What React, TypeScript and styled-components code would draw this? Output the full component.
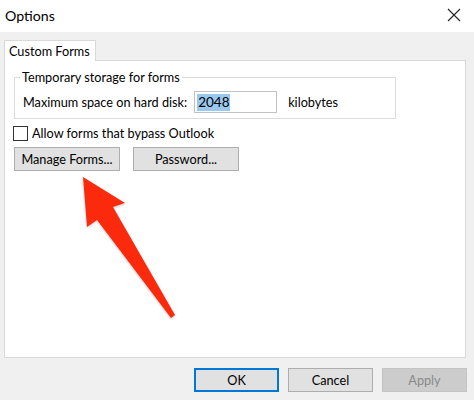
import styled, { createGlobalStyle } from 'styled-components';

const GlobalStyle = createGlobalStyle`
  html, body {
    margin: 0;
    padding: 0;
    background: #f0f0f0;
  }
  * {
    box-sizing: border-box;
  }
`;

const FONT = `Lato, "Noto Sans", Arial, sans-serif`;

const Window = styled.div`
  position: relative;
  width: 474px;
  height: 400px;
  display: flex;
  flex-direction: column;
  background: #f0f0f0;
  font-family: ${FONT};
  font-size: 12.7px;
  color: #000;
  overflow: hidden;
`;

const TitleBar = styled.div`
  height: 32px;
  flex-shrink: 0;
  background: #fff;
  display: flex;
  align-items: center;
  justify-content: space-between;
  padding: 0 13px 0 5px;
`;

const Title = styled.span`
  font-size: 14.2px;
  margin-top: -2px;
`;

const CloseIcon = styled.svg`
  width: 14px;
  height: 14px;
  margin-top: -2px;
`;

const Body = styled.div`
  flex: 1;
  display: flex;
  flex-direction: column;
  padding: 7px 8px 0 4px;
`;

const TabStrip = styled.div`
  display: flex;
  height: 21px;
`;

const Tab = styled.div`
  background: #fff;
  border: 1px solid #d9d9d9;
  border-bottom: none;
  padding: 0 5px 0 4px;
  display: flex;
  align-items: center;
  position: relative;
  top: 1px;
  z-index: 1;
`;

const Panel = styled.div`
  height: 298px;
  background: #fff;
  border: 1px solid #d9d9d9;
  padding: 8px 8px 0 9px;
  display: flex;
  flex-direction: column;
`;

const GroupBox = styled.fieldset`
  margin: 0;
  width: 382px;
  height: 50px;
  border: 1px solid #dcdcdc;
  padding: 0 0 0 8px;
`;

const Legend = styled.legend`
  padding: 0 2px;
  margin-left: -3px;
  line-height: 16px;
`;

const FieldRow = styled.div`
  display: flex;
  align-items: center;
  gap: 7px;
  margin-top: 6px;
  white-space: nowrap;
`;

const TextBox = styled.div`
  width: 83px;
  height: 22px;
  border: 1px solid #c2c2c2;
  padding: 1px 0 0 2px;
  display: flex;
  align-items: center;
`;

const Selected = styled.span`
  background: #99c9ef;
  line-height: 17px;
  padding: 0 1px;
  font-size: 13.5px;
`;

const Units = styled.span`
  margin-left: 4px;
`;

const CheckRow = styled.label`
  display: flex;
  align-items: center;
  gap: 4px;
  margin: 6px 0 0 -1px;
`;

const CheckBox = styled.span`
  width: 15px;
  height: 15px;
  border: 1px solid #333;
  background: #fff;
`;

const ButtonRow = styled.div`
  display: flex;
  gap: 13px;
  margin-top: 6px;
`;

const Button = styled.button<{ $default?: boolean; $disabled?: boolean }>`
  width: 106px;
  height: 24px;
  font-family: ${FONT};
  font-size: 12.7px;
  white-space: nowrap;
  color: ${p => (p.$disabled ? '#8a8a8a' : '#000')};
  background: ${p => (p.$disabled ? '#cccccc' : '#e1e1e1')};
  border: ${p => (p.$default ? '2px' : '1px')} solid
    ${p => (p.$disabled ? '#c4c4c4' : p.$default ? '#0078d7' : '#adadad')};
  padding: 0;
`;

const SmallButton = styled(Button)`
  width: 85px;
`;

const Footer = styled.div`
  display: flex;
  justify-content: flex-end;
  gap: 9px;
  padding: 10px 0 0 0;
  margin-right: -1px;
`;

const Arrow = styled.svg`
  position: absolute;
  left: 0;
  top: 0;
  width: 474px;
  height: 400px;
  pointer-events: none;
`;

export default function App() {
  return (
    <>
      <GlobalStyle />
      <Window>
        <TitleBar>
          <Title>Options</Title>
          <CloseIcon viewBox="0 0 14 14">
            <path d="M1 1 L13 13 M13 1 L1 13" stroke="#222" strokeWidth="1.1" fill="none" />
          </CloseIcon>
        </TitleBar>
        <Body>
          <TabStrip>
            <Tab>Custom Forms</Tab>
          </TabStrip>
          <Panel>
            <GroupBox>
              <Legend>Temporary storage for forms</Legend>
              <FieldRow>
                <span>Maximum space on hard disk:</span>
                <TextBox>
                  <Selected>2048</Selected>
                </TextBox>
                <Units>kilobytes</Units>
              </FieldRow>
            </GroupBox>
            <CheckRow>
              <CheckBox />
              Allow forms that bypass Outlook
            </CheckRow>
            <ButtonRow>
              <Button>Manage Forms...</Button>
              <Button>Password...</Button>
            </ButtonRow>
          </Panel>
          <Footer>
            <SmallButton $default>OK</SmallButton>
            <SmallButton>Cancel</SmallButton>
            <SmallButton $disabled>Apply</SmallButton>
          </Footer>
        </Body>
        <Arrow viewBox="0 0 474 400">
          <defs>
            <filter id="sh" x="-20%" y="-20%" width="140%" height="140%">
              <feDropShadow dx="0" dy="1" stdDeviation="1" floodColor="#000" floodOpacity="0.25" />
            </filter>
          </defs>
          <polygon
            points="83,177 125,203 113,207 175,315 171,318 97,220 87,227"
            fill="#fb2a10"
            filter="url(#sh)"
          />
        </Arrow>
      </Window>
    </>
  );
}
